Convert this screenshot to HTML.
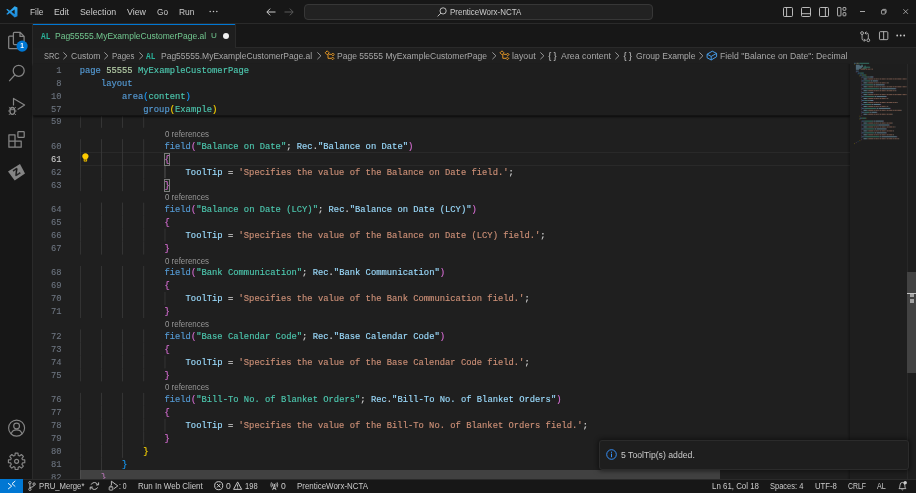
<!DOCTYPE html>
<html lang="en"><head><meta charset="utf-8"><title>Pag55555.MyExampleCustomerPage.al - PrenticeWorx-NCTA - Visual Studio Code</title>
<style>
html,body{margin:0;padding:0;width:916px;height:493px;overflow:hidden;background:#1f1f1f;}
body{position:relative;font-family:"Liberation Sans",sans-serif;font-size:8.9px;color:#ccc;}
.t{position:absolute;white-space:pre;}
.abs{position:absolute;}
svg{position:absolute;overflow:visible;}
.code{-webkit-text-stroke:0.15px currentColor;position:absolute;left:79.7px;white-space:pre;font-family:"Liberation Mono",monospace;font-size:8.81px;letter-spacing:0.015px;line-height:13px;height:13px;color:#d4d4d4;}
.ln{-webkit-text-stroke:0.1px currentColor;position:absolute;left:33px;width:28.6px;text-align:right;font-family:"Liberation Mono",monospace;font-size:8.81px;line-height:13px;height:13px;color:#6e7681;}
.cl{position:absolute;font-size:8.3px;line-height:11px;height:11px;color:#999;white-space:pre;}
.k{color:#569cd6}.n{color:#b5cea8}.ty{color:#4ec9b0}.v{color:#9cdcfe}.s{color:#ce9178}
.b1{color:#ffd700}.b2{color:#da70d6}.b3{color:#179fff}
.g{position:absolute;width:1px;background:#3a3a3a;}
</style></head><body><div id="wb" style="position:absolute;left:0;top:0;width:916px;height:493px;overflow:hidden;will-change:transform;opacity:0.999">
<div class="abs" style="left:0;top:0;width:916px;height:23px;background:#181818;border-bottom:1px solid #2b2b2b;box-sizing:content-box"></div>
<svg style="left:5.8px;top:5.7px" width="11.7" height="11.7" viewBox="0 0 100 100"><defs><linearGradient id="vg" x1="0" y1="0" x2="0" y2="1"><stop offset="0" stop-color="#32b0f7"/><stop offset="1" stop-color="#1b86d6"/></linearGradient></defs><path d="M74 2L98 13V87L74 98L33 59L12 75L2 69L22 50L2 31L12 25L33 41ZM74 29L46 50L74 71Z" fill="url(#vg)" fill-rule="evenodd"/></svg>
<span class="t" id="t0" style="left:29.5px;top:4.60px;font-size:8.9px;color:#cccccc;line-height:14px;transform:scaleX(0.9432);transform-origin:0 50%;">File</span>
<span class="t" id="t1" style="left:54px;top:4.60px;font-size:8.9px;color:#cccccc;line-height:14px;transform:scaleX(0.9806);transform-origin:0 50%;">Edit</span>
<span class="t" id="t2" style="left:80px;top:4.60px;font-size:8.9px;color:#cccccc;line-height:14px;transform:scaleX(0.9914);transform-origin:0 50%;">Selection</span>
<span class="t" id="t3" style="left:127px;top:4.60px;font-size:8.9px;color:#cccccc;line-height:14px;transform:scaleX(0.9959);transform-origin:0 50%;">View</span>
<span class="t" id="t4" style="left:157px;top:4.60px;font-size:8.9px;color:#cccccc;line-height:14px;transform:scaleX(0.9288);transform-origin:0 50%;">Go</span>
<span class="t" id="t5" style="left:179px;top:4.60px;font-size:8.9px;color:#cccccc;line-height:14px;transform:scaleX(0.9520);transform-origin:0 50%;">Run</span>
<svg style="left:208.6px;top:10.1px" width="10" height="3" viewBox="0 0 10 3"><circle cx="1.2" cy="1.5" r="0.75" fill="#ccc"/><circle cx="4.5" cy="1.5" r="0.75" fill="#ccc"/><circle cx="7.8" cy="1.5" r="0.75" fill="#ccc"/></svg>
<svg style="left:266px;top:7.5px" width="10" height="8" viewBox="0 0 10 8"><path d="M9.5 4H1M4.2 0.6L0.8 4L4.2 7.4" stroke="#cccccc" stroke-width="1" fill="none"/></svg>
<svg style="left:284px;top:7.5px" width="10" height="8" viewBox="0 0 10 8"><path d="M0.5 4H9M5.8 0.6L9.2 4L5.8 7.4" stroke="#5a5a5a" stroke-width="1" fill="none"/></svg>
<div class="abs" style="left:303.5px;top:4px;width:349px;height:15.5px;box-sizing:border-box;background:#232323;border:1px solid #383838;border-radius:4px"></div>
<svg style="left:437px;top:6.5px" width="10" height="10" viewBox="0 0 10 10"><circle cx="6.1" cy="3.9" r="3.1" stroke="#ccc" stroke-width="0.9" fill="none"/><path d="M3.9 6.1L0.6 9.4" stroke="#ccc" stroke-width="0.9"/></svg>
<span class="t" id="t6" style="left:450.2px;top:4.60px;font-size:8.9px;color:#cccccc;line-height:14px;transform:scaleX(0.8962);transform-origin:0 50%;">PrenticeWorx-NCTA</span>
<svg style="left:783.1px;top:6.6px" width="10" height="10" viewBox="0 0 10 10"><rect x="0.5" y="0.5" width="9" height="9" rx="1" stroke="#cccccc" fill="none" stroke-width="0.9"/><path d="M3.6 0.5V9.5" stroke="#cccccc" stroke-width="0.9"/></svg>
<svg style="left:800.8px;top:6.6px" width="10" height="10" viewBox="0 0 10 10"><rect x="0.5" y="0.5" width="9" height="9" rx="1" stroke="#cccccc" fill="none" stroke-width="0.9"/><path d="M0.5 6.7H9.5" stroke="#cccccc" stroke-width="0.9"/></svg>
<svg style="left:818.6px;top:6.6px" width="10" height="10" viewBox="0 0 10 10"><rect x="0.5" y="0.5" width="9" height="9" rx="1" stroke="#cccccc" fill="none" stroke-width="0.9"/><path d="M6.4 0.5V9.5" stroke="#cccccc" stroke-width="0.9"/></svg>
<svg style="left:837.3px;top:6.8px" width="9.6" height="9.4" viewBox="0 0 10 10"><rect x="0.5" y="0.5" width="3.6" height="9" rx="0.6" stroke="#cccccc" fill="none" stroke-width="0.9"/><rect x="6.3" y="0.5" width="3" height="3" rx="0.6" stroke="#cccccc" fill="none" stroke-width="0.9"/><rect x="6.3" y="6" width="3" height="3.4" rx="0.6" stroke="#cccccc" fill="none" stroke-width="0.9"/></svg>
<div class="abs" style="left:860px;top:11.2px;width:5.4px;height:0.8px;background:#a8a8a8"></div>
<svg style="left:881.2px;top:8.8px" width="5.6" height="5.4" viewBox="0 0 6 6"><rect x="0.4" y="1.4" width="4.2" height="4.2" rx="0.6" stroke="#cccccc" fill="none" stroke-width="0.8"/><path d="M1.6 1.2V1Q1.6 0.4 2.2 0.4H5Q5.6 0.4 5.6 1V3.8Q5.6 4.4 5 4.4H4.8" stroke="#cccccc" fill="none" stroke-width="0.8"/></svg>
<svg style="left:903.3px;top:9px" width="5.4" height="5.2" viewBox="0 0 6 6"><path d="M0.3 0.3L5.7 5.7M5.7 0.3L0.3 5.7" stroke="#cccccc" stroke-width="0.8"/></svg>
<div class="abs" style="left:0;top:24px;width:31.5px;height:455px;background:#181818;border-right:1px solid #2b2b2b"></div>
<svg style="left:0;top:0" width="916" height="493" viewBox="0 0 916 493" fill="none" stroke-linejoin="round">
<path d="M13.4 43.5V33.3Q13.4 32.3 14.4 32.3H20L24.1 36.4V43.5Q24.1 44.5 23.1 44.5H14.4Q13.4 44.5 13.4 43.5ZM20 32.3V36.4H24.1" stroke="#868686" stroke-width="1.25"/>
<path d="M13.4 36.1H9.7Q8.7 36.1 8.7 37.1V47.7Q8.7 48.7 9.7 48.7H18.5Q19.5 48.7 19.5 47.7V44.5" stroke="#868686" stroke-width="1.25"/>
<circle cx="22.1" cy="46.1" r="5.6" fill="#0078d4"/>
<circle cx="18.7" cy="70.8" r="5.5" stroke="#868686" stroke-width="1.25"/><path d="M14.9 74.9L9.2 81.2" stroke="#868686" stroke-width="1.25"/>
<path d="M13.5 105.6V98.4L24.6 105L17.6 109.6" stroke="#868686" stroke-width="1.2"/>
<ellipse cx="12.35" cy="110.9" rx="2.4" ry="3.4" stroke="#868686" stroke-width="1.35"/>
<path d="M10.4 108.6L8.9 107.2M14.3 108.6L15.8 107.2M9.9 111H8.2M14.8 111H16.5M10.4 113.4L8.9 114.9M14.3 113.4L15.8 114.9M10 109.7H14.7" stroke="#868686" stroke-width="1"/>
<path d="M8.9 134.8H15V141.1H21.2V147.2H8.9ZM15 141.1V147.2M8.9 141.1H15" stroke="#868686" stroke-width="1.25"/>
<rect x="17.9" y="131.7" width="6.3" height="5.6" rx="0.6" stroke="#868686" stroke-width="1.25"/>
<path d="M8 171.4L20 164L25 173.4L14.7 180.5Z" fill="#868686"/>
<text x="16.6" y="175.2" text-anchor="middle" font-family="Liberation Sans, sans-serif" font-weight="bold" font-size="9.4" fill="#181818" stroke="#181818" stroke-width="0.35" transform="rotate(-32 16.6 172.3)">Z</text>
<circle cx="16.6" cy="428.1" r="8" stroke="#868686" stroke-width="1.15"/><circle cx="16.6" cy="426" r="2.9" stroke="#868686" stroke-width="1.15"/><path d="M11.2 433.8Q12.3 429.9 16.6 429.9Q20.9 429.9 22 433.8" stroke="#868686" stroke-width="1.15"/>
<path d="M15.20 453.12L18.00 453.12L18.23 455.42L19.61 455.99L21.39 454.52L23.38 456.51L21.91 458.29L22.48 459.67L24.78 459.90L24.78 462.70L22.48 462.93L21.91 464.31L23.38 466.09L21.39 468.08L19.61 466.61L18.23 467.18L18.00 469.48L15.20 469.48L14.97 467.18L13.59 466.61L11.81 468.08L9.82 466.09L11.29 464.31L10.72 462.93L8.42 462.70L8.42 459.90L10.72 459.67L11.29 458.29L9.82 456.51L11.81 454.52L13.59 455.99L14.97 455.42Z" stroke="#868686" stroke-width="1.15"/><circle cx="16.6" cy="461.3" r="2" stroke="#868686" stroke-width="1.15"/>
</svg>
<span class="t" id="t7" style="left:20.3px;top:39.20px;font-size:6.6px;color:#ffffff;line-height:14px;font-weight:bold;">1</span>
<div class="abs" style="left:32.5px;top:24px;width:883.5px;height:22.5px;background:#181818;border-bottom:1px solid #2b2b2b"></div>
<div class="abs" style="left:32.8px;top:24px;width:201.8px;height:23.5px;background:#1f1f1f;border-right:1px solid #2b2b2b"></div>
<div class="abs" style="left:32.8px;top:23.7px;width:202.4px;height:1.5px;background:#0078d4"></div>
<span class="t" id="t8" style="left:41px;top:30.40px;font-size:8.3px;color:#2bb39b;line-height:14px;font-family:'Liberation Mono', monospace;font-weight:bold;transform:scaleX(0.9429);transform-origin:0 50%;">AL</span>
<span class="t" id="t9" style="left:55.4px;top:29.20px;font-size:8.9px;color:#73c991;line-height:14px;transform:scaleX(0.9577);transform-origin:0 50%;">Pag55555.MyExampleCustomerPage.al</span>
<span class="t" id="t10" style="left:210.9px;top:29.30px;font-size:8.1px;color:#73c991;line-height:14px;">U</span>
<div class="abs" style="left:222.6px;top:33.1px;width:6.2px;height:6.2px;border-radius:50%;background:#f2f2f2"></div>
<svg style="left:860px;top:30.5px" width="10.4" height="11.3" viewBox="0 0 11 12"><circle cx="2.2" cy="2.2" r="1.5" stroke="#cccccc" stroke-width="0.85" fill="none"/><circle cx="8.8" cy="9.8" r="1.5" stroke="#cccccc" stroke-width="0.85" fill="none"/><path d="M2.2 3.8V8.2Q2.2 9.8 3.8 9.8H5.6M4.3 8.3L5.8 9.8L4.3 11.3M8.8 8.2V3.8Q8.8 2.2 7.2 2.2H5.4M6.7 0.7L5.2 2.2L6.7 3.7" stroke="#cccccc" stroke-width="0.85" fill="none"/></svg>
<svg style="left:878.7px;top:30.8px" width="9.3" height="9.7" viewBox="0 0 10 10"><rect x="0.5" y="0.5" width="9" height="8.6" rx="1" stroke="#cccccc" fill="none" stroke-width="0.9"/><path d="M5 0.5V9" stroke="#cccccc" stroke-width="0.9"/></svg>
<svg style="left:896.2px;top:34.3px" width="10" height="3" viewBox="0 0 10 3"><circle cx="1.2" cy="1.5" r="0.9" fill="#ccc"/><circle cx="4.7" cy="1.5" r="0.9" fill="#ccc"/><circle cx="8.2" cy="1.5" r="0.9" fill="#ccc"/></svg>
<span class="t" id="t11" style="left:43.8px;top:49.20px;font-size:8.9px;color:#a9a9a9;line-height:14px;transform:scaleX(0.8320);transform-origin:0 50%;">SRC</span>
<svg style="left:63.199999999999996px;top:51.6px" width="4.4" height="7.6" viewBox="0 0 4.4 7.6"><path d="M0.4 0.4L3.9 3.8L0.4 7.2" stroke="#a9a9a9" stroke-width="0.9" fill="none"/></svg>
<span class="t" id="t12" style="left:71px;top:49.20px;font-size:8.9px;color:#a9a9a9;line-height:14px;transform:scaleX(0.9615);transform-origin:0 50%;">Custom</span>
<svg style="left:104.39999999999999px;top:51.6px" width="4.4" height="7.6" viewBox="0 0 4.4 7.6"><path d="M0.4 0.4L3.9 3.8L0.4 7.2" stroke="#a9a9a9" stroke-width="0.9" fill="none"/></svg>
<span class="t" id="t13" style="left:112.4px;top:49.20px;font-size:8.9px;color:#a9a9a9;line-height:14px;transform:scaleX(0.8899);transform-origin:0 50%;">Pages</span>
<svg style="left:138.60000000000002px;top:51.6px" width="4.4" height="7.6" viewBox="0 0 4.4 7.6"><path d="M0.4 0.4L3.9 3.8L0.4 7.2" stroke="#a9a9a9" stroke-width="0.9" fill="none"/></svg>
<span class="t" id="t14" style="left:146.3px;top:50.40px;font-size:8.3px;color:#2bb39b;line-height:14px;font-family:'Liberation Mono', monospace;font-weight:bold;transform:scaleX(0.9429);transform-origin:0 50%;">AL</span>
<span class="t" id="t15" style="left:161.4px;top:49.20px;font-size:8.9px;color:#a9a9a9;line-height:14px;transform:scaleX(0.9571);transform-origin:0 50%;">Pag55555.MyExampleCustomerPage.al</span>
<svg style="left:316.8px;top:51.6px" width="4.4" height="7.6" viewBox="0 0 4.4 7.6"><path d="M0.4 0.4L3.9 3.8L0.4 7.2" stroke="#a9a9a9" stroke-width="0.9" fill="none"/></svg>
<svg style="left:0;top:0" width="916" height="493" viewBox="0 0 916 493"><path d="M325.20 52.80L327.20 50.80L329.20 52.80L327.20 54.80ZM328.60 54.30H331.60M328.00 54.6V58.3H331.20M331.55 54.50L332.90 53.15L334.25 54.50L332.90 55.85ZM331.25 58.40L332.60 57.05L333.95 58.40L332.60 59.75Z" stroke="#ee9d28" stroke-width="0.95" fill="none" stroke-linejoin="round"/></svg>
<span class="t" id="t16" style="left:337.4px;top:49.20px;font-size:8.9px;color:#a9a9a9;line-height:14px;transform:scaleX(0.9621);transform-origin:0 50%;">Page 55555 MyExampleCustomerPage</span>
<svg style="left:491.6px;top:51.6px" width="4.4" height="7.6" viewBox="0 0 4.4 7.6"><path d="M0.4 0.4L3.9 3.8L0.4 7.2" stroke="#a9a9a9" stroke-width="0.9" fill="none"/></svg>
<svg style="left:0;top:0" width="916" height="493" viewBox="0 0 916 493"><path d="M500.00 52.80L502.00 50.80L504.00 52.80L502.00 54.80ZM503.40 54.30H506.40M502.80 54.6V58.3H506.00M506.35 54.50L507.70 53.15L509.05 54.50L507.70 55.85ZM506.05 58.40L507.40 57.05L508.75 58.40L507.40 59.75Z" stroke="#ee9d28" stroke-width="0.95" fill="none" stroke-linejoin="round"/></svg>
<span class="t" id="t17" style="left:512.2px;top:49.20px;font-size:8.9px;color:#a9a9a9;line-height:14px;transform:scaleX(0.9963);transform-origin:0 50%;">layout</span>
<svg style="left:539.5999999999999px;top:51.6px" width="4.4" height="7.6" viewBox="0 0 4.4 7.6"><path d="M0.4 0.4L3.9 3.8L0.4 7.2" stroke="#a9a9a9" stroke-width="0.9" fill="none"/></svg>
<span class="t" id="t18" style="left:548.3px;top:49.00px;font-size:9.4px;color:#c8c8c8;line-height:14px;letter-spacing:2.1px;">{}</span>
<span class="t" id="t19" style="left:560.9px;top:49.20px;font-size:8.9px;color:#a9a9a9;line-height:14px;transform:scaleX(0.9935);transform-origin:0 50%;">Area content</span>
<svg style="left:614.8px;top:51.6px" width="4.4" height="7.6" viewBox="0 0 4.4 7.6"><path d="M0.4 0.4L3.9 3.8L0.4 7.2" stroke="#a9a9a9" stroke-width="0.9" fill="none"/></svg>
<span class="t" id="t20" style="left:623.5px;top:49.00px;font-size:9.4px;color:#c8c8c8;line-height:14px;letter-spacing:2.1px;">{}</span>
<span class="t" id="t21" style="left:635.8px;top:49.20px;font-size:8.9px;color:#a9a9a9;line-height:14px;transform:scaleX(0.9648);transform-origin:0 50%;">Group Example</span>
<svg style="left:699.4px;top:51.6px" width="4.4" height="7.6" viewBox="0 0 4.4 7.6"><path d="M0.4 0.4L3.9 3.8L0.4 7.2" stroke="#a9a9a9" stroke-width="0.9" fill="none"/></svg>
<svg style="left:0;top:0" width="916" height="493" viewBox="0 0 916 493"><path d="M707.1 54.2L712.3 51.2L716.6 53.4L711.2 56.4ZM707.1 54.2V57.8L711.2 60V56.4M711.2 60L716.6 56.7V53.4" stroke="#4aa3f2" stroke-width="0.95" fill="none" stroke-linejoin="round"/></svg>
<span class="t" id="t22" style="left:719.9px;top:49.20px;font-size:8.9px;color:#a9a9a9;line-height:14px;transform:scaleX(0.9753);transform-origin:0 50%;">Field &quot;Balance on Date&quot;: Decimal</span>
<div class="abs" style="left:79.7px;top:152.1px;width:770px;height:13.6px;box-sizing:border-box;border-top:1px solid #2a2a2a;border-bottom:1px solid #2a2a2a"></div>
<svg style="left:0;top:0" width="916" height="493" viewBox="0 0 916 493"><rect x="79.95" y="114.80" width="0.65" height="13.0" fill="#424242"/><rect x="101.13" y="114.80" width="0.65" height="13.0" fill="#424242"/><rect x="122.30" y="114.80" width="0.65" height="13.0" fill="#424242"/><rect x="143.48" y="114.80" width="0.65" height="13.0" fill="#424242"/><rect x="79.95" y="139.20" width="0.65" height="13.0" fill="#424242"/><rect x="101.13" y="139.20" width="0.65" height="13.0" fill="#424242"/><rect x="122.30" y="139.20" width="0.65" height="13.0" fill="#424242"/><rect x="143.48" y="139.20" width="0.65" height="13.0" fill="#424242"/><rect x="79.95" y="152.20" width="0.65" height="13.0" fill="#424242"/><rect x="101.13" y="152.20" width="0.65" height="13.0" fill="#424242"/><rect x="122.30" y="152.20" width="0.65" height="13.0" fill="#424242"/><rect x="143.48" y="152.20" width="0.65" height="13.0" fill="#424242"/><rect x="79.95" y="165.20" width="0.65" height="13.0" fill="#424242"/><rect x="101.13" y="165.20" width="0.65" height="13.0" fill="#424242"/><rect x="122.30" y="165.20" width="0.65" height="13.0" fill="#424242"/><rect x="143.48" y="165.20" width="0.65" height="13.0" fill="#424242"/><rect x="164.66" y="165.20" width="0.65" height="13.0" fill="#737373"/><rect x="79.95" y="178.20" width="0.65" height="13.0" fill="#424242"/><rect x="101.13" y="178.20" width="0.65" height="13.0" fill="#424242"/><rect x="122.30" y="178.20" width="0.65" height="13.0" fill="#424242"/><rect x="143.48" y="178.20" width="0.65" height="13.0" fill="#424242"/><rect x="79.95" y="202.60" width="0.65" height="13.0" fill="#424242"/><rect x="101.13" y="202.60" width="0.65" height="13.0" fill="#424242"/><rect x="122.30" y="202.60" width="0.65" height="13.0" fill="#424242"/><rect x="143.48" y="202.60" width="0.65" height="13.0" fill="#424242"/><rect x="79.95" y="215.60" width="0.65" height="13.0" fill="#424242"/><rect x="101.13" y="215.60" width="0.65" height="13.0" fill="#424242"/><rect x="122.30" y="215.60" width="0.65" height="13.0" fill="#424242"/><rect x="143.48" y="215.60" width="0.65" height="13.0" fill="#424242"/><rect x="79.95" y="228.60" width="0.65" height="13.0" fill="#424242"/><rect x="101.13" y="228.60" width="0.65" height="13.0" fill="#424242"/><rect x="122.30" y="228.60" width="0.65" height="13.0" fill="#424242"/><rect x="143.48" y="228.60" width="0.65" height="13.0" fill="#424242"/><rect x="164.66" y="228.60" width="0.65" height="13.0" fill="#424242"/><rect x="79.95" y="241.60" width="0.65" height="13.0" fill="#424242"/><rect x="101.13" y="241.60" width="0.65" height="13.0" fill="#424242"/><rect x="122.30" y="241.60" width="0.65" height="13.0" fill="#424242"/><rect x="143.48" y="241.60" width="0.65" height="13.0" fill="#424242"/><rect x="79.95" y="266.00" width="0.65" height="13.0" fill="#424242"/><rect x="101.13" y="266.00" width="0.65" height="13.0" fill="#424242"/><rect x="122.30" y="266.00" width="0.65" height="13.0" fill="#424242"/><rect x="143.48" y="266.00" width="0.65" height="13.0" fill="#424242"/><rect x="79.95" y="279.00" width="0.65" height="13.0" fill="#424242"/><rect x="101.13" y="279.00" width="0.65" height="13.0" fill="#424242"/><rect x="122.30" y="279.00" width="0.65" height="13.0" fill="#424242"/><rect x="143.48" y="279.00" width="0.65" height="13.0" fill="#424242"/><rect x="79.95" y="292.00" width="0.65" height="13.0" fill="#424242"/><rect x="101.13" y="292.00" width="0.65" height="13.0" fill="#424242"/><rect x="122.30" y="292.00" width="0.65" height="13.0" fill="#424242"/><rect x="143.48" y="292.00" width="0.65" height="13.0" fill="#424242"/><rect x="164.66" y="292.00" width="0.65" height="13.0" fill="#424242"/><rect x="79.95" y="305.00" width="0.65" height="13.0" fill="#424242"/><rect x="101.13" y="305.00" width="0.65" height="13.0" fill="#424242"/><rect x="122.30" y="305.00" width="0.65" height="13.0" fill="#424242"/><rect x="143.48" y="305.00" width="0.65" height="13.0" fill="#424242"/><rect x="79.95" y="329.40" width="0.65" height="13.0" fill="#424242"/><rect x="101.13" y="329.40" width="0.65" height="13.0" fill="#424242"/><rect x="122.30" y="329.40" width="0.65" height="13.0" fill="#424242"/><rect x="143.48" y="329.40" width="0.65" height="13.0" fill="#424242"/><rect x="79.95" y="342.40" width="0.65" height="13.0" fill="#424242"/><rect x="101.13" y="342.40" width="0.65" height="13.0" fill="#424242"/><rect x="122.30" y="342.40" width="0.65" height="13.0" fill="#424242"/><rect x="143.48" y="342.40" width="0.65" height="13.0" fill="#424242"/><rect x="79.95" y="355.40" width="0.65" height="13.0" fill="#424242"/><rect x="101.13" y="355.40" width="0.65" height="13.0" fill="#424242"/><rect x="122.30" y="355.40" width="0.65" height="13.0" fill="#424242"/><rect x="143.48" y="355.40" width="0.65" height="13.0" fill="#424242"/><rect x="164.66" y="355.40" width="0.65" height="13.0" fill="#424242"/><rect x="79.95" y="368.40" width="0.65" height="13.0" fill="#424242"/><rect x="101.13" y="368.40" width="0.65" height="13.0" fill="#424242"/><rect x="122.30" y="368.40" width="0.65" height="13.0" fill="#424242"/><rect x="143.48" y="368.40" width="0.65" height="13.0" fill="#424242"/><rect x="79.95" y="392.80" width="0.65" height="13.0" fill="#424242"/><rect x="101.13" y="392.80" width="0.65" height="13.0" fill="#424242"/><rect x="122.30" y="392.80" width="0.65" height="13.0" fill="#424242"/><rect x="143.48" y="392.80" width="0.65" height="13.0" fill="#424242"/><rect x="79.95" y="405.80" width="0.65" height="13.0" fill="#424242"/><rect x="101.13" y="405.80" width="0.65" height="13.0" fill="#424242"/><rect x="122.30" y="405.80" width="0.65" height="13.0" fill="#424242"/><rect x="143.48" y="405.80" width="0.65" height="13.0" fill="#424242"/><rect x="79.95" y="418.80" width="0.65" height="13.0" fill="#424242"/><rect x="101.13" y="418.80" width="0.65" height="13.0" fill="#424242"/><rect x="122.30" y="418.80" width="0.65" height="13.0" fill="#424242"/><rect x="143.48" y="418.80" width="0.65" height="13.0" fill="#424242"/><rect x="164.66" y="418.80" width="0.65" height="13.0" fill="#424242"/><rect x="79.95" y="431.80" width="0.65" height="13.0" fill="#424242"/><rect x="101.13" y="431.80" width="0.65" height="13.0" fill="#424242"/><rect x="122.30" y="431.80" width="0.65" height="13.0" fill="#424242"/><rect x="143.48" y="431.80" width="0.65" height="13.0" fill="#424242"/><rect x="79.95" y="444.80" width="0.65" height="13.0" fill="#424242"/><rect x="101.13" y="444.80" width="0.65" height="13.0" fill="#424242"/><rect x="122.30" y="444.80" width="0.65" height="13.0" fill="#424242"/><rect x="79.95" y="457.80" width="0.65" height="13.0" fill="#424242"/><rect x="101.13" y="457.80" width="0.65" height="13.0" fill="#424242"/><rect x="79.95" y="470.80" width="0.65" height="13.0" fill="#424242"/></svg>
<div class="abs" style="left:164.31px;top:152.50px;width:5.5px;height:13px;box-sizing:border-box;border:0.8px solid #7c7c7c;background:rgba(0,100,0,0.12)"></div>
<div class="abs" style="left:164.31px;top:178.50px;width:5.5px;height:13px;box-sizing:border-box;border:0.8px solid #7c7c7c;background:rgba(0,100,0,0.12)"></div>
<div class="ln" style="top:116.20px">59</div>
<div class="ln" style="top:140.60px">60</div>
<div class="code" style="top:140.60px">                <span class="k">field</span><span class="b2">(</span><span class="ty">"Balance on Date"</span>; <span class="v">Rec</span>.<span class="v">"Balance on Date"</span><span class="b2">)</span></div>
<div class="ln" style="top:153.60px;color:#cccccc">61</div>
<div class="code" style="top:153.60px">                <span class="b2">{</span></div>
<div class="ln" style="top:166.60px">62</div>
<div class="code" style="top:166.60px">                    <span class="v">ToolTip</span> = <span class="s">'Specifies the value of the Balance on Date field.'</span>;</div>
<div class="ln" style="top:179.60px">63</div>
<div class="code" style="top:179.60px">                <span class="b2">}</span></div>
<div class="ln" style="top:204.00px">64</div>
<div class="code" style="top:204.00px">                <span class="k">field</span><span class="b2">(</span><span class="ty">"Balance on Date (LCY)"</span>; <span class="v">Rec</span>.<span class="v">"Balance on Date (LCY)"</span><span class="b2">)</span></div>
<div class="ln" style="top:217.00px">65</div>
<div class="code" style="top:217.00px">                <span class="b2">{</span></div>
<div class="ln" style="top:230.00px">66</div>
<div class="code" style="top:230.00px">                    <span class="v">ToolTip</span> = <span class="s">'Specifies the value of the Balance on Date (LCY) field.'</span>;</div>
<div class="ln" style="top:243.00px">67</div>
<div class="code" style="top:243.00px">                <span class="b2">}</span></div>
<div class="ln" style="top:267.40px">68</div>
<div class="code" style="top:267.40px">                <span class="k">field</span><span class="b2">(</span><span class="ty">"Bank Communication"</span>; <span class="v">Rec</span>.<span class="v">"Bank Communication"</span><span class="b2">)</span></div>
<div class="ln" style="top:280.40px">69</div>
<div class="code" style="top:280.40px">                <span class="b2">{</span></div>
<div class="ln" style="top:293.40px">70</div>
<div class="code" style="top:293.40px">                    <span class="v">ToolTip</span> = <span class="s">'Specifies the value of the Bank Communication field.'</span>;</div>
<div class="ln" style="top:306.40px">71</div>
<div class="code" style="top:306.40px">                <span class="b2">}</span></div>
<div class="ln" style="top:330.80px">72</div>
<div class="code" style="top:330.80px">                <span class="k">field</span><span class="b2">(</span><span class="ty">"Base Calendar Code"</span>; <span class="v">Rec</span>.<span class="v">"Base Calendar Code"</span><span class="b2">)</span></div>
<div class="ln" style="top:343.80px">73</div>
<div class="code" style="top:343.80px">                <span class="b2">{</span></div>
<div class="ln" style="top:356.80px">74</div>
<div class="code" style="top:356.80px">                    <span class="v">ToolTip</span> = <span class="s">'Specifies the value of the Base Calendar Code field.'</span>;</div>
<div class="ln" style="top:369.80px">75</div>
<div class="code" style="top:369.80px">                <span class="b2">}</span></div>
<div class="ln" style="top:394.20px">76</div>
<div class="code" style="top:394.20px">                <span class="k">field</span><span class="b2">(</span><span class="ty">"Bill-To No. of Blanket Orders"</span>; <span class="v">Rec</span>.<span class="v">"Bill-To No. of Blanket Orders"</span><span class="b2">)</span></div>
<div class="ln" style="top:407.20px">77</div>
<div class="code" style="top:407.20px">                <span class="b2">{</span></div>
<div class="ln" style="top:420.20px">78</div>
<div class="code" style="top:420.20px">                    <span class="v">ToolTip</span> = <span class="s">'Specifies the value of the Bill-To No. of Blanket Orders field.'</span>;</div>
<div class="ln" style="top:433.20px">79</div>
<div class="code" style="top:433.20px">                <span class="b2">}</span></div>
<div class="ln" style="top:446.20px">80</div>
<div class="code" style="top:446.20px">            <span class="b1">}</span></div>
<div class="ln" style="top:459.20px">81</div>
<div class="code" style="top:459.20px">        <span class="b3">}</span></div>
<div class="ln" style="top:472.20px">82</div>
<div class="code" style="top:472.20px">    <span class="b2">}</span></div>
<span class="t" id="t23" style="left:164.5px;top:127.70px;font-size:8.2px;color:#999999;line-height:14px;transform:scaleX(0.9667);transform-origin:0 50%;">0 references</span>
<span class="t" id="t24" style="left:164.5px;top:191.10px;font-size:8.2px;color:#999999;line-height:14px;transform:scaleX(0.9667);transform-origin:0 50%;">0 references</span>
<span class="t" id="t25" style="left:164.5px;top:254.50px;font-size:8.2px;color:#999999;line-height:14px;transform:scaleX(0.9667);transform-origin:0 50%;">0 references</span>
<span class="t" id="t26" style="left:164.5px;top:317.90px;font-size:8.2px;color:#999999;line-height:14px;transform:scaleX(0.9667);transform-origin:0 50%;">0 references</span>
<span class="t" id="t27" style="left:164.5px;top:381.30px;font-size:8.2px;color:#999999;line-height:14px;transform:scaleX(0.9667);transform-origin:0 50%;">0 references</span>
<svg style="left:82.2px;top:153.1px" width="6.8" height="8.8" viewBox="0 0 8 10"><path d="M4 0.2C1.8 0.2 0.3 1.8 0.3 3.7C0.3 5 1.2 5.8 1.8 6.5V7.2H6.2V6.5C6.8 5.8 7.7 5 7.7 3.7C7.7 1.8 6.2 0.2 4 0.2Z" fill="#ffcc00"/><rect x="2" y="7.1" width="4" height="2.7" rx="0.5" fill="#ffcc00"/><rect x="3" y="7.8" width="2" height="1" fill="#3a3000"/></svg>
<div class="abs" style="left:32.5px;top:63.5px;width:817.5px;height:51.6px;background:#1f1f1f;box-shadow:0 1px 2px rgba(0,0,0,0.7);border-bottom:1px solid #141414"></div>
<div class="ln" style="top:64.90px">1</div>
<div class="code" style="top:64.90px"><span class="k">page</span> <span class="n">55555</span> <span class="ty">MyExampleCustomerPage</span></div>
<div class="ln" style="top:77.90px">8</div>
<div class="code" style="top:77.90px">    <span class="k">layout</span></div>
<div class="ln" style="top:90.90px">10</div>
<div class="code" style="top:90.90px">        <span class="k">area</span><span class="b3">(</span><span class="ty">content</span><span class="b3">)</span></div>
<div class="ln" style="top:103.90px">57</div>
<div class="code" style="top:103.90px">            <span class="k">group</span><span class="b1">(</span><span class="ty">Example</span><span class="b1">)</span></div>
<div class="abs" style="left:846.5px;top:63.5px;width:3px;height:415px;background:linear-gradient(90deg,rgba(0,0,0,0),rgba(0,0,0,0.28))"></div>
<div class="abs" style="left:849.5px;top:63.5px;width:57.5px;height:415px;background:#1f1f1f"></div>
<svg style="left:0;top:0" width="916" height="493" viewBox="0 0 916 493" opacity="0.5"><rect x="854.00" y="62.80" width="1.90" height="0.95" fill="#569cd6"/><rect x="856.38" y="62.80" width="2.38" height="0.95" fill="#b5cea8"/><rect x="859.23" y="62.80" width="9.97" height="0.95" fill="#4ec9b0"/><rect x="854.00" y="63.78" width="0.47" height="0.95" fill="#ffd700"/><rect x="855.90" y="64.76" width="3.80" height="0.95" fill="#9cdcfe"/><rect x="861.12" y="64.76" width="1.90" height="0.95" fill="#4ec9b0"/><rect x="855.90" y="65.74" width="7.12" height="0.95" fill="#9cdcfe"/><rect x="864.45" y="65.74" width="1.42" height="0.95" fill="#4ec9b0"/><rect x="855.90" y="66.72" width="6.17" height="0.95" fill="#9cdcfe"/><rect x="863.50" y="66.72" width="6.65" height="0.95" fill="#4ec9b0"/><rect x="855.90" y="67.70" width="5.22" height="0.95" fill="#9cdcfe"/><rect x="862.55" y="67.70" width="3.80" height="0.95" fill="#4ec9b0"/><rect x="855.90" y="68.68" width="3.32" height="0.95" fill="#9cdcfe"/><rect x="860.65" y="68.68" width="4.75" height="0.95" fill="#ce9178"/><rect x="865.88" y="68.68" width="1.42" height="0.95" fill="#ce9178"/><rect x="867.77" y="68.68" width="2.38" height="0.95" fill="#ce9178"/><rect x="870.62" y="68.68" width="0.95" height="0.95" fill="#ce9178"/><rect x="872.05" y="68.68" width="0.95" height="0.95" fill="#ce9178"/><rect x="855.90" y="70.64" width="2.85" height="0.95" fill="#569cd6"/><rect x="855.90" y="71.62" width="0.47" height="0.95" fill="#da70d6"/><rect x="857.80" y="72.60" width="1.90" height="0.95" fill="#569cd6"/><rect x="859.70" y="72.60" width="0.47" height="0.95" fill="#179fff"/><rect x="860.17" y="72.60" width="3.32" height="0.95" fill="#4ec9b0"/><rect x="863.50" y="72.60" width="0.47" height="0.95" fill="#179fff"/><rect x="857.80" y="73.58" width="0.47" height="0.95" fill="#179fff"/><rect x="859.70" y="74.56" width="2.38" height="0.95" fill="#569cd6"/><rect x="862.08" y="74.56" width="0.47" height="0.95" fill="#ffd700"/><rect x="862.55" y="74.56" width="3.32" height="0.95" fill="#4ec9b0"/><rect x="865.88" y="74.56" width="0.47" height="0.95" fill="#ffd700"/><rect x="859.70" y="75.54" width="0.47" height="0.95" fill="#ffd700"/><rect x="861.60" y="76.52" width="2.38" height="0.95" fill="#569cd6"/><rect x="863.98" y="76.52" width="0.47" height="0.95" fill="#da70d6"/><rect x="864.45" y="76.52" width="2.85" height="0.95" fill="#4ec9b0"/><rect x="867.30" y="76.52" width="0.47" height="0.95" fill="#d4d4d4"/><rect x="868.25" y="76.52" width="1.42" height="0.95" fill="#9cdcfe"/><rect x="870.15" y="76.52" width="2.85" height="0.95" fill="#9cdcfe"/><rect x="873.00" y="76.52" width="0.47" height="0.95" fill="#da70d6"/><rect x="861.60" y="77.50" width="0.47" height="0.95" fill="#da70d6"/><rect x="863.50" y="78.48" width="3.32" height="0.95" fill="#9cdcfe"/><rect x="867.30" y="78.48" width="0.47" height="0.95" fill="#d4d4d4"/><rect x="868.25" y="78.48" width="4.75" height="0.95" fill="#ce9178"/><rect x="873.48" y="78.48" width="1.42" height="0.95" fill="#ce9178"/><rect x="875.38" y="78.48" width="2.38" height="0.95" fill="#ce9178"/><rect x="878.23" y="78.48" width="0.95" height="0.95" fill="#ce9178"/><rect x="879.65" y="78.48" width="1.42" height="0.95" fill="#ce9178"/><rect x="881.55" y="78.48" width="3.32" height="0.95" fill="#ce9178"/><rect x="885.35" y="78.48" width="0.95" height="0.95" fill="#ce9178"/><rect x="886.77" y="78.48" width="1.90" height="0.95" fill="#ce9178"/><rect x="889.15" y="78.48" width="2.85" height="0.95" fill="#ce9178"/><rect x="892.48" y="78.48" width="1.42" height="0.95" fill="#ce9178"/><rect x="894.38" y="78.48" width="2.38" height="0.95" fill="#ce9178"/><rect x="897.23" y="78.48" width="3.80" height="0.95" fill="#ce9178"/><rect x="901.50" y="78.48" width="0.95" height="0.95" fill="#ce9178"/><rect x="902.92" y="78.48" width="2.85" height="0.95" fill="#ce9178"/><rect x="906.25" y="78.48" width="0.55" height="0.95" fill="#ce9178"/><rect x="861.60" y="79.46" width="0.47" height="0.95" fill="#da70d6"/><rect x="861.60" y="80.44" width="2.38" height="0.95" fill="#569cd6"/><rect x="863.98" y="80.44" width="0.47" height="0.95" fill="#da70d6"/><rect x="864.45" y="80.44" width="5.22" height="0.95" fill="#4ec9b0"/><rect x="869.67" y="80.44" width="0.47" height="0.95" fill="#d4d4d4"/><rect x="870.62" y="80.44" width="1.42" height="0.95" fill="#9cdcfe"/><rect x="872.52" y="80.44" width="5.22" height="0.95" fill="#9cdcfe"/><rect x="877.75" y="80.44" width="0.47" height="0.95" fill="#da70d6"/><rect x="861.60" y="81.42" width="0.47" height="0.95" fill="#da70d6"/><rect x="863.50" y="82.40" width="3.32" height="0.95" fill="#9cdcfe"/><rect x="867.30" y="82.40" width="0.47" height="0.95" fill="#d4d4d4"/><rect x="868.25" y="82.40" width="4.75" height="0.95" fill="#ce9178"/><rect x="873.48" y="82.40" width="1.42" height="0.95" fill="#ce9178"/><rect x="875.38" y="82.40" width="2.38" height="0.95" fill="#ce9178"/><rect x="878.23" y="82.40" width="0.95" height="0.95" fill="#ce9178"/><rect x="879.65" y="82.40" width="1.42" height="0.95" fill="#ce9178"/><rect x="881.55" y="82.40" width="3.32" height="0.95" fill="#ce9178"/><rect x="885.35" y="82.40" width="0.95" height="0.95" fill="#ce9178"/><rect x="886.77" y="82.40" width="1.42" height="0.95" fill="#ce9178"/><rect x="888.20" y="82.40" width="0.47" height="0.95" fill="#d4d4d4"/><rect x="861.60" y="83.38" width="0.47" height="0.95" fill="#da70d6"/><rect x="861.60" y="84.36" width="2.38" height="0.95" fill="#569cd6"/><rect x="863.98" y="84.36" width="0.47" height="0.95" fill="#da70d6"/><rect x="864.45" y="84.36" width="8.55" height="0.95" fill="#4ec9b0"/><rect x="873.00" y="84.36" width="0.47" height="0.95" fill="#d4d4d4"/><rect x="873.95" y="84.36" width="1.42" height="0.95" fill="#9cdcfe"/><rect x="875.85" y="84.36" width="8.55" height="0.95" fill="#9cdcfe"/><rect x="884.40" y="84.36" width="0.47" height="0.95" fill="#da70d6"/><rect x="861.60" y="85.34" width="0.47" height="0.95" fill="#da70d6"/><rect x="863.50" y="86.32" width="3.32" height="0.95" fill="#9cdcfe"/><rect x="867.30" y="86.32" width="0.47" height="0.95" fill="#d4d4d4"/><rect x="868.25" y="86.32" width="4.75" height="0.95" fill="#ce9178"/><rect x="873.48" y="86.32" width="1.42" height="0.95" fill="#ce9178"/><rect x="875.38" y="86.32" width="2.38" height="0.95" fill="#ce9178"/><rect x="878.23" y="86.32" width="0.95" height="0.95" fill="#ce9178"/><rect x="879.65" y="86.32" width="1.42" height="0.95" fill="#ce9178"/><rect x="881.55" y="86.32" width="3.32" height="0.95" fill="#ce9178"/><rect x="885.35" y="86.32" width="0.95" height="0.95" fill="#ce9178"/><rect x="886.77" y="86.32" width="1.90" height="0.95" fill="#ce9178"/><rect x="889.15" y="86.32" width="2.85" height="0.95" fill="#ce9178"/><rect x="892.48" y="86.32" width="1.42" height="0.95" fill="#ce9178"/><rect x="894.38" y="86.32" width="2.38" height="0.95" fill="#ce9178"/><rect x="897.23" y="86.32" width="3.80" height="0.95" fill="#ce9178"/><rect x="901.50" y="86.32" width="0.95" height="0.95" fill="#ce9178"/><rect x="902.92" y="86.32" width="2.85" height="0.95" fill="#ce9178"/><rect x="906.25" y="86.32" width="0.55" height="0.95" fill="#ce9178"/><rect x="861.60" y="87.30" width="0.47" height="0.95" fill="#da70d6"/><rect x="861.60" y="88.28" width="2.38" height="0.95" fill="#569cd6"/><rect x="863.98" y="88.28" width="0.47" height="0.95" fill="#da70d6"/><rect x="864.45" y="88.28" width="14.25" height="0.95" fill="#4ec9b0"/><rect x="878.70" y="88.28" width="0.47" height="0.95" fill="#d4d4d4"/><rect x="879.65" y="88.28" width="1.42" height="0.95" fill="#9cdcfe"/><rect x="881.55" y="88.28" width="14.25" height="0.95" fill="#9cdcfe"/><rect x="895.80" y="88.28" width="0.47" height="0.95" fill="#da70d6"/><rect x="861.60" y="89.26" width="0.47" height="0.95" fill="#da70d6"/><rect x="863.50" y="90.24" width="3.32" height="0.95" fill="#9cdcfe"/><rect x="867.30" y="90.24" width="0.47" height="0.95" fill="#d4d4d4"/><rect x="868.25" y="90.24" width="4.75" height="0.95" fill="#ce9178"/><rect x="873.48" y="90.24" width="1.42" height="0.95" fill="#ce9178"/><rect x="875.38" y="90.24" width="2.38" height="0.95" fill="#ce9178"/><rect x="878.23" y="90.24" width="0.95" height="0.95" fill="#ce9178"/><rect x="879.65" y="90.24" width="1.42" height="0.95" fill="#ce9178"/><rect x="881.55" y="90.24" width="3.32" height="0.95" fill="#ce9178"/><rect x="885.35" y="90.24" width="0.95" height="0.95" fill="#ce9178"/><rect x="886.77" y="90.24" width="1.90" height="0.95" fill="#ce9178"/><rect x="889.15" y="90.24" width="2.85" height="0.95" fill="#ce9178"/><rect x="892.48" y="90.24" width="1.42" height="0.95" fill="#ce9178"/><rect x="894.38" y="90.24" width="1.42" height="0.95" fill="#ce9178"/><rect x="895.80" y="90.24" width="0.47" height="0.95" fill="#d4d4d4"/><rect x="861.60" y="91.22" width="0.47" height="0.95" fill="#da70d6"/><rect x="861.60" y="92.20" width="2.38" height="0.95" fill="#569cd6"/><rect x="863.98" y="92.20" width="0.47" height="0.95" fill="#da70d6"/><rect x="864.45" y="92.20" width="2.85" height="0.95" fill="#4ec9b0"/><rect x="867.30" y="92.20" width="0.47" height="0.95" fill="#d4d4d4"/><rect x="868.25" y="92.20" width="1.42" height="0.95" fill="#9cdcfe"/><rect x="870.15" y="92.20" width="2.85" height="0.95" fill="#9cdcfe"/><rect x="873.00" y="92.20" width="0.47" height="0.95" fill="#da70d6"/><rect x="861.60" y="93.18" width="0.47" height="0.95" fill="#da70d6"/><rect x="863.50" y="94.16" width="3.32" height="0.95" fill="#9cdcfe"/><rect x="867.30" y="94.16" width="0.47" height="0.95" fill="#d4d4d4"/><rect x="868.25" y="94.16" width="4.75" height="0.95" fill="#ce9178"/><rect x="873.48" y="94.16" width="1.42" height="0.95" fill="#ce9178"/><rect x="875.38" y="94.16" width="2.38" height="0.95" fill="#ce9178"/><rect x="878.23" y="94.16" width="0.95" height="0.95" fill="#ce9178"/><rect x="879.65" y="94.16" width="1.42" height="0.95" fill="#ce9178"/><rect x="881.55" y="94.16" width="3.32" height="0.95" fill="#ce9178"/><rect x="885.35" y="94.16" width="0.95" height="0.95" fill="#ce9178"/><rect x="886.77" y="94.16" width="1.90" height="0.95" fill="#ce9178"/><rect x="889.15" y="94.16" width="2.85" height="0.95" fill="#ce9178"/><rect x="892.48" y="94.16" width="1.42" height="0.95" fill="#ce9178"/><rect x="894.38" y="94.16" width="2.38" height="0.95" fill="#ce9178"/><rect x="897.23" y="94.16" width="3.80" height="0.95" fill="#ce9178"/><rect x="901.50" y="94.16" width="0.95" height="0.95" fill="#ce9178"/><rect x="902.92" y="94.16" width="2.85" height="0.95" fill="#ce9178"/><rect x="906.25" y="94.16" width="0.55" height="0.95" fill="#ce9178"/><rect x="861.60" y="95.14" width="0.47" height="0.95" fill="#da70d6"/><rect x="861.60" y="96.12" width="2.38" height="0.95" fill="#569cd6"/><rect x="863.98" y="96.12" width="0.47" height="0.95" fill="#da70d6"/><rect x="864.45" y="96.12" width="9.50" height="0.95" fill="#4ec9b0"/><rect x="873.95" y="96.12" width="0.47" height="0.95" fill="#d4d4d4"/><rect x="874.90" y="96.12" width="1.42" height="0.95" fill="#9cdcfe"/><rect x="876.80" y="96.12" width="9.50" height="0.95" fill="#9cdcfe"/><rect x="886.30" y="96.12" width="0.47" height="0.95" fill="#da70d6"/><rect x="861.60" y="97.10" width="0.47" height="0.95" fill="#da70d6"/><rect x="863.50" y="98.08" width="3.32" height="0.95" fill="#9cdcfe"/><rect x="867.30" y="98.08" width="0.47" height="0.95" fill="#d4d4d4"/><rect x="868.25" y="98.08" width="4.75" height="0.95" fill="#ce9178"/><rect x="873.48" y="98.08" width="1.42" height="0.95" fill="#ce9178"/><rect x="875.38" y="98.08" width="2.38" height="0.95" fill="#ce9178"/><rect x="878.23" y="98.08" width="0.95" height="0.95" fill="#ce9178"/><rect x="879.65" y="98.08" width="1.42" height="0.95" fill="#ce9178"/><rect x="881.55" y="98.08" width="3.32" height="0.95" fill="#ce9178"/><rect x="885.35" y="98.08" width="0.95" height="0.95" fill="#ce9178"/><rect x="886.77" y="98.08" width="0.95" height="0.95" fill="#ce9178"/><rect x="887.73" y="98.08" width="0.47" height="0.95" fill="#d4d4d4"/><rect x="861.60" y="99.06" width="0.47" height="0.95" fill="#da70d6"/><rect x="861.60" y="100.04" width="2.38" height="0.95" fill="#569cd6"/><rect x="863.98" y="100.04" width="0.47" height="0.95" fill="#da70d6"/><rect x="864.45" y="100.04" width="2.85" height="0.95" fill="#4ec9b0"/><rect x="867.30" y="100.04" width="0.47" height="0.95" fill="#d4d4d4"/><rect x="868.25" y="100.04" width="1.42" height="0.95" fill="#9cdcfe"/><rect x="870.15" y="100.04" width="2.85" height="0.95" fill="#9cdcfe"/><rect x="873.00" y="100.04" width="0.47" height="0.95" fill="#da70d6"/><rect x="861.60" y="101.02" width="0.47" height="0.95" fill="#da70d6"/><rect x="863.50" y="102.00" width="3.32" height="0.95" fill="#9cdcfe"/><rect x="867.30" y="102.00" width="0.47" height="0.95" fill="#d4d4d4"/><rect x="868.25" y="102.00" width="4.75" height="0.95" fill="#ce9178"/><rect x="873.48" y="102.00" width="1.42" height="0.95" fill="#ce9178"/><rect x="875.38" y="102.00" width="2.38" height="0.95" fill="#ce9178"/><rect x="878.23" y="102.00" width="0.95" height="0.95" fill="#ce9178"/><rect x="879.65" y="102.00" width="1.42" height="0.95" fill="#ce9178"/><rect x="881.55" y="102.00" width="3.32" height="0.95" fill="#ce9178"/><rect x="885.35" y="102.00" width="0.95" height="0.95" fill="#ce9178"/><rect x="886.77" y="102.00" width="1.90" height="0.95" fill="#ce9178"/><rect x="889.15" y="102.00" width="2.85" height="0.95" fill="#ce9178"/><rect x="892.48" y="102.00" width="1.42" height="0.95" fill="#ce9178"/><rect x="894.38" y="102.00" width="2.38" height="0.95" fill="#ce9178"/><rect x="897.23" y="102.00" width="0.47" height="0.95" fill="#d4d4d4"/><rect x="861.60" y="102.98" width="0.47" height="0.95" fill="#da70d6"/><rect x="861.60" y="103.96" width="2.38" height="0.95" fill="#569cd6"/><rect x="863.98" y="103.96" width="0.47" height="0.95" fill="#da70d6"/><rect x="864.45" y="103.96" width="6.65" height="0.95" fill="#4ec9b0"/><rect x="871.10" y="103.96" width="0.47" height="0.95" fill="#d4d4d4"/><rect x="872.05" y="103.96" width="1.42" height="0.95" fill="#9cdcfe"/><rect x="873.95" y="103.96" width="6.65" height="0.95" fill="#9cdcfe"/><rect x="880.60" y="103.96" width="0.47" height="0.95" fill="#da70d6"/><rect x="861.60" y="104.94" width="0.47" height="0.95" fill="#da70d6"/><rect x="863.50" y="105.92" width="3.32" height="0.95" fill="#9cdcfe"/><rect x="867.30" y="105.92" width="0.47" height="0.95" fill="#d4d4d4"/><rect x="868.25" y="105.92" width="4.75" height="0.95" fill="#ce9178"/><rect x="873.48" y="105.92" width="1.42" height="0.95" fill="#ce9178"/><rect x="875.38" y="105.92" width="2.38" height="0.95" fill="#ce9178"/><rect x="878.23" y="105.92" width="0.95" height="0.95" fill="#ce9178"/><rect x="879.65" y="105.92" width="1.42" height="0.95" fill="#ce9178"/><rect x="881.55" y="105.92" width="3.32" height="0.95" fill="#ce9178"/><rect x="885.35" y="105.92" width="0.95" height="0.95" fill="#ce9178"/><rect x="886.77" y="105.92" width="0.95" height="0.95" fill="#ce9178"/><rect x="887.73" y="105.92" width="0.47" height="0.95" fill="#d4d4d4"/><rect x="861.60" y="106.90" width="0.47" height="0.95" fill="#da70d6"/><rect x="861.60" y="107.88" width="2.38" height="0.95" fill="#569cd6"/><rect x="863.98" y="107.88" width="0.47" height="0.95" fill="#da70d6"/><rect x="864.45" y="107.88" width="11.40" height="0.95" fill="#4ec9b0"/><rect x="875.85" y="107.88" width="0.47" height="0.95" fill="#d4d4d4"/><rect x="876.80" y="107.88" width="1.42" height="0.95" fill="#9cdcfe"/><rect x="878.70" y="107.88" width="11.40" height="0.95" fill="#9cdcfe"/><rect x="890.10" y="107.88" width="0.47" height="0.95" fill="#da70d6"/><rect x="861.60" y="108.86" width="0.47" height="0.95" fill="#da70d6"/><rect x="863.50" y="109.84" width="3.32" height="0.95" fill="#9cdcfe"/><rect x="867.30" y="109.84" width="0.47" height="0.95" fill="#d4d4d4"/><rect x="868.25" y="109.84" width="4.75" height="0.95" fill="#ce9178"/><rect x="873.48" y="109.84" width="1.42" height="0.95" fill="#ce9178"/><rect x="875.38" y="109.84" width="2.38" height="0.95" fill="#ce9178"/><rect x="878.23" y="109.84" width="0.95" height="0.95" fill="#ce9178"/><rect x="879.65" y="109.84" width="1.42" height="0.95" fill="#ce9178"/><rect x="881.55" y="109.84" width="3.32" height="0.95" fill="#ce9178"/><rect x="885.35" y="109.84" width="0.95" height="0.95" fill="#ce9178"/><rect x="886.77" y="109.84" width="1.90" height="0.95" fill="#ce9178"/><rect x="889.15" y="109.84" width="2.85" height="0.95" fill="#ce9178"/><rect x="892.48" y="109.84" width="1.42" height="0.95" fill="#ce9178"/><rect x="894.38" y="109.84" width="2.38" height="0.95" fill="#ce9178"/><rect x="897.23" y="109.84" width="3.80" height="0.95" fill="#ce9178"/><rect x="901.50" y="109.84" width="0.47" height="0.95" fill="#d4d4d4"/><rect x="861.60" y="110.82" width="0.47" height="0.95" fill="#da70d6"/><rect x="861.60" y="111.80" width="2.38" height="0.95" fill="#569cd6"/><rect x="863.98" y="111.80" width="0.47" height="0.95" fill="#da70d6"/><rect x="864.45" y="111.80" width="4.75" height="0.95" fill="#4ec9b0"/><rect x="869.20" y="111.80" width="0.47" height="0.95" fill="#d4d4d4"/><rect x="870.15" y="111.80" width="1.42" height="0.95" fill="#9cdcfe"/><rect x="872.05" y="111.80" width="4.75" height="0.95" fill="#9cdcfe"/><rect x="876.80" y="111.80" width="0.47" height="0.95" fill="#da70d6"/><rect x="861.60" y="112.78" width="0.47" height="0.95" fill="#da70d6"/><rect x="863.50" y="113.76" width="3.32" height="0.95" fill="#9cdcfe"/><rect x="867.30" y="113.76" width="0.47" height="0.95" fill="#d4d4d4"/><rect x="868.25" y="113.76" width="4.75" height="0.95" fill="#ce9178"/><rect x="873.48" y="113.76" width="1.42" height="0.95" fill="#ce9178"/><rect x="875.38" y="113.76" width="2.38" height="0.95" fill="#ce9178"/><rect x="878.23" y="113.76" width="0.95" height="0.95" fill="#ce9178"/><rect x="879.65" y="113.76" width="1.42" height="0.95" fill="#ce9178"/><rect x="881.55" y="113.76" width="3.32" height="0.95" fill="#ce9178"/><rect x="885.35" y="113.76" width="0.95" height="0.95" fill="#ce9178"/><rect x="886.77" y="113.76" width="1.90" height="0.95" fill="#ce9178"/><rect x="889.15" y="113.76" width="2.85" height="0.95" fill="#ce9178"/><rect x="892.00" y="113.76" width="0.47" height="0.95" fill="#d4d4d4"/><rect x="861.60" y="114.74" width="0.47" height="0.95" fill="#da70d6"/><rect x="859.70" y="115.72" width="0.47" height="0.95" fill="#ffd700"/><rect x="859.70" y="117.68" width="2.38" height="0.95" fill="#569cd6"/><rect x="862.08" y="117.68" width="0.47" height="0.95" fill="#ffd700"/><rect x="862.55" y="117.68" width="3.32" height="0.95" fill="#4ec9b0"/><rect x="865.88" y="117.68" width="0.47" height="0.95" fill="#ffd700"/><rect x="859.70" y="118.66" width="0.47" height="0.95" fill="#ffd700"/><rect x="861.60" y="120.62" width="2.38" height="0.95" fill="#569cd6"/><rect x="863.98" y="120.62" width="0.47" height="0.95" fill="#da70d6"/><rect x="864.45" y="120.62" width="8.07" height="0.95" fill="#4ec9b0"/><rect x="872.52" y="120.62" width="0.47" height="0.95" fill="#d4d4d4"/><rect x="873.48" y="120.62" width="1.42" height="0.95" fill="#9cdcfe"/><rect x="875.38" y="120.62" width="8.07" height="0.95" fill="#9cdcfe"/><rect x="883.45" y="120.62" width="0.47" height="0.95" fill="#da70d6"/><rect x="861.60" y="121.60" width="0.47" height="0.95" fill="#da70d6"/><rect x="863.50" y="122.58" width="3.32" height="0.95" fill="#9cdcfe"/><rect x="867.30" y="122.58" width="0.47" height="0.95" fill="#d4d4d4"/><rect x="868.25" y="122.58" width="4.75" height="0.95" fill="#ce9178"/><rect x="873.48" y="122.58" width="1.42" height="0.95" fill="#ce9178"/><rect x="875.38" y="122.58" width="2.38" height="0.95" fill="#ce9178"/><rect x="878.23" y="122.58" width="0.95" height="0.95" fill="#ce9178"/><rect x="879.65" y="122.58" width="1.42" height="0.95" fill="#ce9178"/><rect x="881.55" y="122.58" width="3.32" height="0.95" fill="#ce9178"/><rect x="885.35" y="122.58" width="0.95" height="0.95" fill="#ce9178"/><rect x="886.77" y="122.58" width="1.90" height="0.95" fill="#ce9178"/><rect x="889.15" y="122.58" width="2.85" height="0.95" fill="#ce9178"/><rect x="892.00" y="122.58" width="0.47" height="0.95" fill="#d4d4d4"/><rect x="861.60" y="123.56" width="0.47" height="0.95" fill="#da70d6"/><rect x="861.60" y="124.54" width="2.38" height="0.95" fill="#569cd6"/><rect x="863.98" y="124.54" width="0.47" height="0.95" fill="#da70d6"/><rect x="864.45" y="124.54" width="10.92" height="0.95" fill="#4ec9b0"/><rect x="875.38" y="124.54" width="0.47" height="0.95" fill="#d4d4d4"/><rect x="876.33" y="124.54" width="1.42" height="0.95" fill="#9cdcfe"/><rect x="878.23" y="124.54" width="10.92" height="0.95" fill="#9cdcfe"/><rect x="889.15" y="124.54" width="0.47" height="0.95" fill="#da70d6"/><rect x="861.60" y="125.52" width="0.47" height="0.95" fill="#da70d6"/><rect x="863.50" y="126.50" width="3.32" height="0.95" fill="#9cdcfe"/><rect x="867.30" y="126.50" width="0.47" height="0.95" fill="#d4d4d4"/><rect x="868.25" y="126.50" width="4.75" height="0.95" fill="#ce9178"/><rect x="873.48" y="126.50" width="1.42" height="0.95" fill="#ce9178"/><rect x="875.38" y="126.50" width="2.38" height="0.95" fill="#ce9178"/><rect x="878.23" y="126.50" width="0.95" height="0.95" fill="#ce9178"/><rect x="879.65" y="126.50" width="1.42" height="0.95" fill="#ce9178"/><rect x="881.55" y="126.50" width="3.32" height="0.95" fill="#ce9178"/><rect x="885.35" y="126.50" width="0.95" height="0.95" fill="#ce9178"/><rect x="886.77" y="126.50" width="1.90" height="0.95" fill="#ce9178"/><rect x="889.15" y="126.50" width="2.85" height="0.95" fill="#ce9178"/><rect x="892.48" y="126.50" width="1.42" height="0.95" fill="#ce9178"/><rect x="894.38" y="126.50" width="0.47" height="0.95" fill="#ce9178"/><rect x="894.85" y="126.50" width="0.47" height="0.95" fill="#d4d4d4"/><rect x="861.60" y="127.48" width="0.47" height="0.95" fill="#da70d6"/><rect x="861.60" y="128.46" width="2.38" height="0.95" fill="#569cd6"/><rect x="863.98" y="128.46" width="0.47" height="0.95" fill="#da70d6"/><rect x="864.45" y="128.46" width="9.50" height="0.95" fill="#4ec9b0"/><rect x="873.95" y="128.46" width="0.47" height="0.95" fill="#d4d4d4"/><rect x="874.90" y="128.46" width="1.42" height="0.95" fill="#9cdcfe"/><rect x="876.80" y="128.46" width="9.50" height="0.95" fill="#9cdcfe"/><rect x="886.30" y="128.46" width="0.47" height="0.95" fill="#da70d6"/><rect x="861.60" y="129.44" width="0.47" height="0.95" fill="#da70d6"/><rect x="863.50" y="130.42" width="3.32" height="0.95" fill="#9cdcfe"/><rect x="867.30" y="130.42" width="0.47" height="0.95" fill="#d4d4d4"/><rect x="868.25" y="130.42" width="4.75" height="0.95" fill="#ce9178"/><rect x="873.48" y="130.42" width="1.42" height="0.95" fill="#ce9178"/><rect x="875.38" y="130.42" width="2.38" height="0.95" fill="#ce9178"/><rect x="878.23" y="130.42" width="0.95" height="0.95" fill="#ce9178"/><rect x="879.65" y="130.42" width="1.42" height="0.95" fill="#ce9178"/><rect x="881.55" y="130.42" width="3.32" height="0.95" fill="#ce9178"/><rect x="885.35" y="130.42" width="0.95" height="0.95" fill="#ce9178"/><rect x="886.77" y="130.42" width="1.90" height="0.95" fill="#ce9178"/><rect x="889.15" y="130.42" width="2.85" height="0.95" fill="#ce9178"/><rect x="892.48" y="130.42" width="0.95" height="0.95" fill="#ce9178"/><rect x="893.42" y="130.42" width="0.47" height="0.95" fill="#d4d4d4"/><rect x="861.60" y="131.40" width="0.47" height="0.95" fill="#da70d6"/><rect x="861.60" y="132.38" width="2.38" height="0.95" fill="#569cd6"/><rect x="863.98" y="132.38" width="0.47" height="0.95" fill="#da70d6"/><rect x="864.45" y="132.38" width="9.50" height="0.95" fill="#4ec9b0"/><rect x="873.95" y="132.38" width="0.47" height="0.95" fill="#d4d4d4"/><rect x="874.90" y="132.38" width="1.42" height="0.95" fill="#9cdcfe"/><rect x="876.80" y="132.38" width="9.50" height="0.95" fill="#9cdcfe"/><rect x="886.30" y="132.38" width="0.47" height="0.95" fill="#da70d6"/><rect x="861.60" y="133.36" width="0.47" height="0.95" fill="#da70d6"/><rect x="863.50" y="134.34" width="3.32" height="0.95" fill="#9cdcfe"/><rect x="867.30" y="134.34" width="0.47" height="0.95" fill="#d4d4d4"/><rect x="868.25" y="134.34" width="4.75" height="0.95" fill="#ce9178"/><rect x="873.48" y="134.34" width="1.42" height="0.95" fill="#ce9178"/><rect x="875.38" y="134.34" width="2.38" height="0.95" fill="#ce9178"/><rect x="878.23" y="134.34" width="0.95" height="0.95" fill="#ce9178"/><rect x="879.65" y="134.34" width="1.42" height="0.95" fill="#ce9178"/><rect x="881.55" y="134.34" width="3.32" height="0.95" fill="#ce9178"/><rect x="885.35" y="134.34" width="0.95" height="0.95" fill="#ce9178"/><rect x="886.77" y="134.34" width="1.90" height="0.95" fill="#ce9178"/><rect x="889.15" y="134.34" width="2.85" height="0.95" fill="#ce9178"/><rect x="892.48" y="134.34" width="0.95" height="0.95" fill="#ce9178"/><rect x="893.42" y="134.34" width="0.47" height="0.95" fill="#d4d4d4"/><rect x="861.60" y="135.32" width="0.47" height="0.95" fill="#da70d6"/><rect x="861.60" y="136.30" width="2.38" height="0.95" fill="#569cd6"/><rect x="863.98" y="136.30" width="0.47" height="0.95" fill="#da70d6"/><rect x="864.45" y="136.30" width="14.72" height="0.95" fill="#4ec9b0"/><rect x="879.17" y="136.30" width="0.47" height="0.95" fill="#d4d4d4"/><rect x="880.12" y="136.30" width="1.42" height="0.95" fill="#9cdcfe"/><rect x="882.02" y="136.30" width="14.72" height="0.95" fill="#9cdcfe"/><rect x="896.75" y="136.30" width="0.47" height="0.95" fill="#da70d6"/><rect x="861.60" y="137.28" width="0.47" height="0.95" fill="#da70d6"/><rect x="863.50" y="138.26" width="3.32" height="0.95" fill="#9cdcfe"/><rect x="867.30" y="138.26" width="0.47" height="0.95" fill="#d4d4d4"/><rect x="868.25" y="138.26" width="4.75" height="0.95" fill="#ce9178"/><rect x="873.48" y="138.26" width="1.42" height="0.95" fill="#ce9178"/><rect x="875.38" y="138.26" width="2.38" height="0.95" fill="#ce9178"/><rect x="878.23" y="138.26" width="0.95" height="0.95" fill="#ce9178"/><rect x="879.65" y="138.26" width="1.42" height="0.95" fill="#ce9178"/><rect x="881.55" y="138.26" width="3.32" height="0.95" fill="#ce9178"/><rect x="885.35" y="138.26" width="0.95" height="0.95" fill="#ce9178"/><rect x="886.77" y="138.26" width="1.90" height="0.95" fill="#ce9178"/><rect x="889.15" y="138.26" width="2.85" height="0.95" fill="#ce9178"/><rect x="892.48" y="138.26" width="1.42" height="0.95" fill="#ce9178"/><rect x="894.38" y="138.26" width="2.38" height="0.95" fill="#ce9178"/><rect x="897.23" y="138.26" width="1.42" height="0.95" fill="#ce9178"/><rect x="898.65" y="138.26" width="0.47" height="0.95" fill="#d4d4d4"/><rect x="861.60" y="139.24" width="0.47" height="0.95" fill="#da70d6"/><rect x="859.70" y="140.22" width="0.47" height="0.95" fill="#ffd700"/><rect x="857.80" y="141.20" width="0.47" height="0.95" fill="#179fff"/><rect x="855.90" y="142.18" width="0.47" height="0.95" fill="#da70d6"/><rect x="854.00" y="143.16" width="0.47" height="0.95" fill="#ffd700"/></svg>
<div class="abs" style="left:907px;top:63.5px;width:9px;height:415px;background:#1f1f1f;border-left:1px solid #292929;box-sizing:border-box"></div>
<div class="abs" style="left:907px;top:272px;width:9px;height:100.5px;background:#434343"></div>
<div class="abs" style="left:907px;top:292.6px;width:9px;height:0.9px;background:#c4c4c4"></div>
<div class="abs" style="left:910.2px;top:293.5px;width:3.6px;height:3.6px;background:#a3a3a3"></div>
<div class="abs" style="left:910.2px;top:299.2px;width:3.6px;height:3.8px;background:#a3a3a3"></div>
<div class="abs" style="left:79.7px;top:470.2px;width:640.5px;height:8.4px;background:rgba(121,121,121,0.4)"></div>
<div class="abs" style="left:598.8px;top:440px;width:310.4px;height:29.8px;box-sizing:border-box;background:#1f1f1f;border:1px solid #2c2c2c;border-radius:3px;box-shadow:0 0 5px 1px rgba(0,0,0,0.5)"></div>
<svg style="left:606.3px;top:449.2px" width="11" height="11" viewBox="0 0 11 11"><circle cx="5.5" cy="5.5" r="4.8" stroke="#3794ff" stroke-width="0.95" fill="none"/><rect x="5" y="4.6" width="1" height="3.6" fill="#3794ff"/><rect x="5" y="2.7" width="1" height="1.1" fill="#3794ff"/></svg>
<span class="t" id="t28" style="left:621.2px;top:447.80px;font-size:8.9px;color:#cccccc;line-height:14px;transform:scaleX(0.9777);transform-origin:0 50%;">5 ToolTip(s) added.</span>
<div class="abs" style="left:0;top:478.5px;width:916px;height:14.5px;background:#181818;border-top:1px solid #2b2b2b;box-sizing:border-box"></div>
<div class="abs" style="left:0;top:478.5px;width:23.4px;height:14.5px;background:#0078d4"></div>
<svg style="left:0;top:0" width="916" height="493" viewBox="0 0 916 493"><path d="M8.4 483.5L11.7 486.1L8.4 488.8M15 481.2L12 483.7L15 486.3" stroke="#ffffff" stroke-width="0.95" fill="none" stroke-linecap="round" stroke-linejoin="round"/></svg>
<svg style="left:27.6px;top:481.2px" width="8" height="10" viewBox="0 0 8 10"><circle cx="1.9" cy="1.7" r="1.2" stroke="#cccccc" stroke-width="0.8" fill="none"/><circle cx="1.9" cy="8.3" r="1.2" stroke="#cccccc" stroke-width="0.8" fill="none"/><circle cx="6.1" cy="3.1" r="1.2" stroke="#cccccc" stroke-width="0.8" fill="none"/><path d="M1.9 2.9V7.1M6.1 4.3Q6.1 6 1.9 6.6" stroke="#cccccc" stroke-width="0.8" fill="none"/></svg>
<span class="t" id="t29" style="left:39.4px;top:479.20px;font-size:8.6px;color:#cccccc;line-height:14px;transform:scaleX(0.8965);transform-origin:0 50%;">PRU_Merge*</span>
<svg style="left:0;top:0" width="916" height="493" viewBox="0 0 916 493"><path d="M91.2 484.6A3.5 3.5 0 0 1 97.6 484.6M97.6 487.4A3.5 3.5 0 0 1 91.2 487.4" stroke="#cccccc" stroke-width="0.9" fill="none"/><path d="M96 484.9H98.6V482.4M92.8 487.1H90.2V489.6" stroke="#cccccc" stroke-width="0.9" fill="none"/></svg>
<svg style="left:0;top:0" width="916" height="493" viewBox="0 0 916 493"><path d="M111.4 485V481.2L117.8 485.9L113.8 488.8" stroke="#cccccc" stroke-width="0.9" fill="none" stroke-linejoin="round"/><rect x="109.2" y="487" width="3.6" height="3.1" rx="0.5" stroke="#cccccc" stroke-width="0.85" fill="none"/><path d="M109.9 487V486.4Q111 485 112.1 486.4V487" stroke="#cccccc" stroke-width="0.8" fill="none"/></svg>
<span class="t" id="t30" style="left:118.9px;top:479.20px;font-size:8.6px;color:#cccccc;line-height:14px;transform:scaleX(0.7948);transform-origin:0 50%;">: 0</span>
<span class="t" id="t31" style="left:137.7px;top:479.20px;font-size:8.6px;color:#cccccc;line-height:14px;transform:scaleX(0.9311);transform-origin:0 50%;">Run In Web Client</span>
<svg style="left:214.1px;top:481.1px" width="9.4" height="9.4" viewBox="0 0 10 10"><circle cx="5" cy="5" r="4.3" stroke="#cccccc" stroke-width="1.05" fill="none"/><path d="M3.2 3.2L6.8 6.8M6.8 3.2L3.2 6.8" stroke="#cccccc" stroke-width="1.05"/></svg>
<span class="t" id="t32" style="left:225.9px;top:479.20px;font-size:8.6px;color:#cccccc;line-height:14px;">0</span>
<svg style="left:233px;top:480.8px" width="9.2" height="9.2" viewBox="0 0 10 10"><path d="M5 1L9.4 9.1H0.6Z" stroke="#cccccc" stroke-width="1.05" fill="none" stroke-linejoin="round"/><path d="M5 3.9V6.3M5 7.1V8.1" stroke="#cccccc" stroke-width="1.1"/></svg>
<span class="t" id="t33" style="left:245.2px;top:479.20px;font-size:8.6px;color:#cccccc;line-height:14px;transform:scaleX(0.8784);transform-origin:0 50%;">198</span>
<svg style="left:269.7px;top:481.7px" width="8.6" height="8.4" viewBox="0 0 9 10"><circle cx="4.5" cy="3.4" r="1" fill="#cccccc"/><path d="M4.5 4.2L2.4 9.6M4.5 4.2L6.6 9.6M3 7.8H6" stroke="#cccccc" stroke-width="1" fill="none"/><path d="M2.7 1.5Q1.7 3.4 2.7 5.3M6.3 1.5Q7.3 3.4 6.3 5.3M1.1 0.4Q-0.3 3.4 1.1 6.4M7.9 0.4Q9.3 3.4 7.9 6.4" stroke="#cccccc" stroke-width="0.95" fill="none"/></svg>
<span class="t" id="t34" style="left:281px;top:479.20px;font-size:8.6px;color:#cccccc;line-height:14px;">0</span>
<span class="t" id="t35" style="left:296.7px;top:479.20px;font-size:8.6px;color:#cccccc;line-height:14px;transform:scaleX(0.9228);transform-origin:0 50%;">PrenticeWorx-NCTA</span>
<span class="t" id="t36" style="left:712.4px;top:479.20px;font-size:8.6px;color:#cccccc;line-height:14px;transform:scaleX(0.9193);transform-origin:0 50%;">Ln 61, Col 18</span>
<span class="t" id="t37" style="left:770.2px;top:479.20px;font-size:8.6px;color:#cccccc;line-height:14px;transform:scaleX(0.8739);transform-origin:0 50%;">Spaces: 4</span>
<span class="t" id="t38" style="left:814.9px;top:479.20px;font-size:8.6px;color:#cccccc;line-height:14px;transform:scaleX(0.8990);transform-origin:0 50%;">UTF-8</span>
<span class="t" id="t39" style="left:847.6px;top:479.20px;font-size:8.6px;color:#cccccc;line-height:14px;transform:scaleX(0.8017);transform-origin:0 50%;">CRLF</span>
<span class="t" id="t40" style="left:877px;top:479.20px;font-size:8.6px;color:#cccccc;line-height:14px;transform:scaleX(0.8273);transform-origin:0 50%;">AL</span>
<svg style="left:898px;top:481.2px" width="9" height="10" viewBox="0 0 9 10"><path d="M1 7.6Q2 6.6 2 4.2Q2 1.4 4.4 1.4Q6.8 1.4 6.8 4.2Q6.8 6.6 7.8 7.6Z" stroke="#cccccc" stroke-width="0.85" fill="none" stroke-linejoin="round"/><path d="M3.5 8.3Q4.4 9.6 5.3 8.3" stroke="#cccccc" stroke-width="0.8" fill="none"/><circle cx="7.2" cy="1.8" r="1.7" fill="#cccccc"/></svg>
</div></body></html>
